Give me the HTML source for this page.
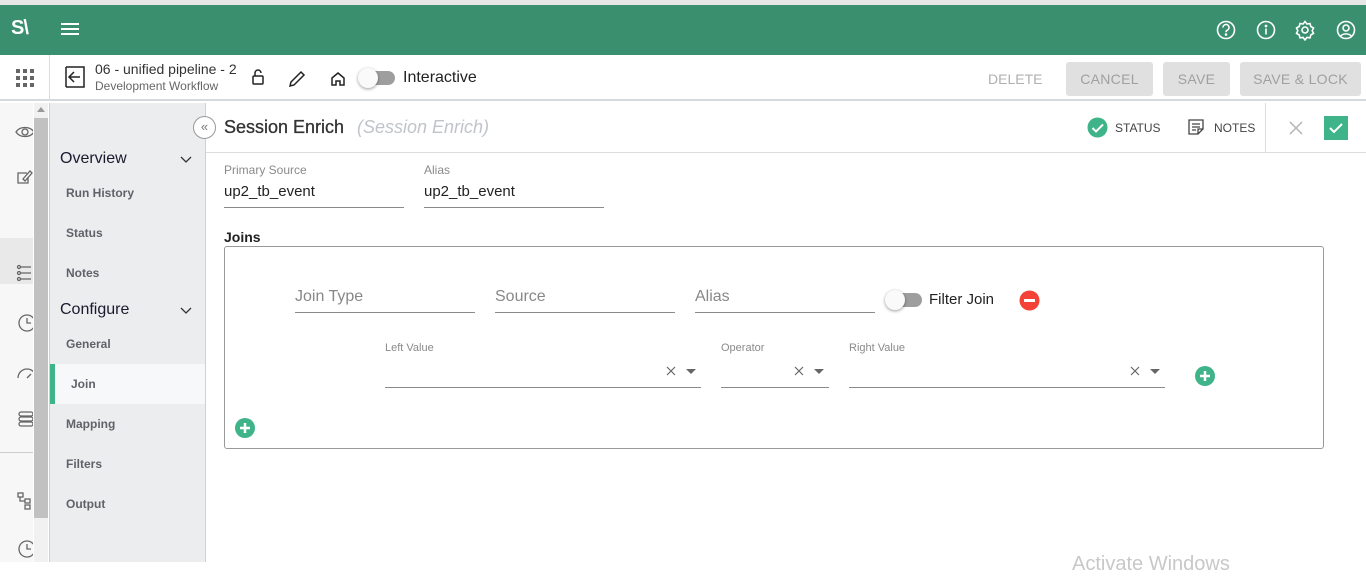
<!DOCTYPE html>
<html><head><meta charset="utf-8"><style>
*{box-sizing:border-box;margin:0;padding:0}
body{width:1366px;height:562px;overflow:hidden;background:#fff;font-family:"Liberation Sans",Arial,sans-serif;position:relative;color:#212121}
.a{position:absolute}
.top{left:0;top:0;width:1366px;height:5px;background:#e6e6e6}
.green{left:0;top:5px;width:1366px;height:50px;background:#3a8f6e}
.tb{left:0;top:55px;width:1366px;height:46px;background:#fff;border-bottom:2px solid #d5d8dc}
.btn{height:34px;top:62px;background:#e0e0e0;border-radius:3px;color:#a0a0a0;font-size:14px;text-align:center;line-height:34px;letter-spacing:.3px}
.rail{left:0;top:103px;width:33px;height:459px;background:#f7f7f7;overflow:hidden}
.sb{left:34px;top:103px;width:14px;height:459px;background:#f1f1f1}
.nav{left:49px;top:103px;width:157px;height:459px;background:#ebedef;border-left:1px solid #d0d0d0;border-right:1px solid #d0d0d0}
.ni{position:absolute;left:16px;font-size:12px;font-weight:bold;color:#5f6368}
.nh{position:absolute;left:10px;font-size:16px;color:#1a1a2e}
.lbl{font-size:12px;color:#8a8a8a}
.val{font-size:15px;color:#222}
.ul{border-bottom:1px solid #8a8a8a}
.ph{font-size:16px;color:#888}
</style></head><body>
<div class="a top"></div>
<div class="a green"></div>
<div class="a" style="left:11px;top:17px;color:#fff;font-weight:bold;font-size:20px;letter-spacing:-1px">S\</div>
<div class="a" style="left:61px;top:23px;width:18px;height:2px;background:#fff;box-shadow:0 5px #fff,0 10px #fff"></div>
<svg class="a" style="left:1215px;top:19px" width="145" height="22" fill="none" stroke="#fff" stroke-width="1.6">
<circle cx="11" cy="11" r="8.5"/><path d="M8 8.5a3 3 0 1 1 4 2.8c-.8.4-1 1-1 2"/><circle cx="11" cy="15.5" r=".5" fill="#fff"/>
<circle cx="51" cy="11" r="8.5"/><circle cx="51" cy="7" r=".6" fill="#fff"/><path d="M51 9.5v6"/>
<circle cx="90" cy="11" r="3"/><path d="M90 2.5l2 2.5 3-.5 .8 3 2.7 1.5-1.3 2.7 1.3 2.7-2.7 1.5-.8 3-3-.5-2 2.5-2-2.5-3 .5-.8-3-2.7-1.5 1.3-2.7-1.3-2.7 2.7-1.5.8-3 3 .5z"/>
<circle cx="131" cy="11" r="8.5"/><circle cx="131" cy="9" r="3"/><path d="M125.5 17.5c2-3.5 9-3.5 11 0"/>
</svg>
<div class="a tb"></div>
<div class="a" style="left:0;top:55px;width:50px;height:46px;border-right:1px solid #ddd"></div>
<svg class="a" style="left:16px;top:69px" width="18" height="18" fill="#666"><rect x="0" y="0" width="4" height="4"/><rect x="7" y="0" width="4" height="4"/><rect x="14" y="0" width="4" height="4"/><rect x="0" y="7" width="4" height="4"/><rect x="7" y="7" width="4" height="4"/><rect x="14" y="7" width="4" height="4"/><rect x="0" y="14" width="4" height="4"/><rect x="7" y="14" width="4" height="4"/><rect x="14" y="14" width="4" height="4"/></svg>
<svg class="a" style="left:64px;top:66px" width="22" height="22" fill="none" stroke="#222" stroke-width="1.5"><path d="M2 1v20M2 1h18v20H2M16 11H6M10 6l-5 5 5 5"/></svg>
<div class="a" style="left:95px;top:61px;font-size:14px;color:#333">06 - unified pipeline - 2</div>
<div class="a" style="left:95px;top:79px;font-size:12px;color:#666">Development Workflow</div>
<svg class="a" style="left:250px;top:68px" width="120" height="20" fill="none" stroke="#222" stroke-width="1.5"><rect x="3" y="8" width="10" height="8" rx="1"/><path d="M5 8V5a3 3 0 0 1 6 0"/><path d="M40 18l1-4 10-10 3 3-10 10z"/><path d="M82 10l6-5 6 5v7h-4v-4h-4v4h-4z"/></svg>
<div class="a" style="left:361px;top:71px;width:34px;height:14px;border-radius:7px;background:#9e9e9e"></div>
<div class="a" style="left:358px;top:68px;width:20px;height:20px;border-radius:50%;background:#fafafa;box-shadow:0 1px 3px rgba(0,0,0,.4)"></div>
<div class="a" style="left:403px;top:69px;font-size:16px;color:#222">Interactive</div>
<div class="a" style="left:988px;top:71px;font-size:14px;color:#b0b0b0">DELETE</div>
<div class="a btn" style="left:1066px;width:87px">CANCEL</div>
<div class="a btn" style="left:1163px;width:67px">SAVE</div>
<div class="a btn" style="left:1240px;width:121px">SAVE &amp; LOCK</div>

<div class="a rail">
<div class="a" style="left:0;top:135px;width:33px;height:46px;background:#e9e9e9"></div>
<div class="a" style="left:0;top:349px;width:33px;height:1px;background:#ccc"></div>
<svg class="a" style="left:15px;top:18px" width="22" height="440" fill="none" stroke="#666" stroke-width="1.3">
<path d="M1 11c4-6 14-6 18 0c-4 6-14 6-18 0z"/><circle cx="10" cy="11" r="3"/>
<path d="M12 52H3v10h10v-6M8 58l7-8 2 2-7 8z"/>
<circle cx="4" cy="146" r="1.5"/><circle cx="4" cy="152" r="1.5"/><circle cx="4" cy="158" r="1.5"/><path d="M6 146h10M6 152h10M6 158h10"/>
<circle cx="12" cy="202" r="8"/><path d="M12 197v5h4"/>
<path d="M3 257a9 9 0 0 1 18 0"/><path d="M12 257l4-4"/>
<rect x="4" y="291" width="14" height="4" rx="2"/><rect x="4" y="296" width="14" height="4" rx="2"/><rect x="4" y="301" width="14" height="4" rx="2"/>
<rect x="3" y="372" width="5" height="4"/><rect x="10" y="378" width="5" height="4"/><rect x="10" y="384" width="5" height="4"/><path d="M5 376v4h5"/>
<circle cx="12" cy="428" r="8"/><path d="M12 423v5h4"/>
</svg>
</div>
<div class="a sb"><div class="a" style="left:0;top:15px;width:14px;height:400px;background:#c1c1c1"></div><div class="a" style="left:3px;top:4px;width:0;height:0;border-left:4px solid transparent;border-right:4px solid transparent;border-bottom:5px solid #999"></div></div>
<div class="a nav">
<div class="nh" style="top:47px">Overview</div>
<svg class="a" style="left:130px;top:53px" width="12" height="8" fill="none" stroke="#333" stroke-width="1.3"><path d="M1 1l5 5 5-5"/></svg>
<div class="ni" style="top:83px">Run History</div>
<div class="ni" style="top:123px">Status</div>
<div class="ni" style="top:163px">Notes</div>
<div class="nh" style="top:198px">Configure</div>
<svg class="a" style="left:130px;top:204px" width="12" height="8" fill="none" stroke="#333" stroke-width="1.3"><path d="M1 1l5 5 5-5"/></svg>
<div class="ni" style="top:234px">General</div>
<div class="a" style="left:0;top:261px;width:155px;height:40px;background:#f7f8fa;border-left:5px solid #3fb488"></div>
<div class="ni" style="top:274px;left:21px">Join</div>
<div class="ni" style="top:314px">Mapping</div>
<div class="ni" style="top:354px">Filters</div>
<div class="ni" style="top:394px">Output</div>
</div>
<div class="a" style="left:193px;top:116px;width:23px;height:23px;border-radius:50%;border:1px solid #999;background:#fff;color:#777;font-size:13px;text-align:center;line-height:20px">&laquo;</div>

<div class="a" style="left:224px;top:117px;font-size:18px;color:#333;-webkit-text-stroke:.3px #333">Session Enrich</div>
<div class="a" style="left:357px;top:117px;font-size:18px;color:#c0c4ca;font-style:italic">(Session Enrich)</div>
<div class="a" style="left:206px;top:152px;width:1160px;height:1px;background:#ddd"></div>
<div class="a" style="left:1265px;top:103px;width:1px;height:49px;background:#ddd"></div>
<svg class="a" style="left:1087px;top:117px" width="21" height="21"><circle cx="10.5" cy="10.5" r="10" fill="#3fb488"/><path d="M5.5 11l3.5 3.5 7-7" stroke="#fff" stroke-width="2" fill="none"/></svg>
<div class="a" style="left:1115px;top:121px;font-size:12px;color:#444">STATUS</div>
<svg class="a" style="left:1188px;top:119px" width="18" height="18" fill="none" stroke="#444" stroke-width="1.3"><path d="M1 1h14v9l-5 5H1z"/><path d="M4 5h8M4 8h8M4 11h4M10 15v-5h5"/></svg>
<div class="a" style="left:1214px;top:121px;font-size:12px;color:#444">NOTES</div>
<svg class="a" style="left:1289px;top:121px" width="14" height="14" stroke="#bbb" stroke-width="1.6"><path d="M1 1l12 12M13 1L1 13"/></svg>
<svg class="a" style="left:1324px;top:116px" width="24" height="24"><rect width="24" height="24" fill="#3fb488"/><path d="M6 12l4 4 8-8" stroke="#fff" stroke-width="2" fill="none"/></svg>

<div class="a lbl" style="left:224px;top:163px">Primary Source</div>
<div class="a val" style="left:224px;top:183px">up2_tb_event</div>
<div class="a ul" style="left:224px;top:207px;width:180px"></div>
<div class="a lbl" style="left:424px;top:163px">Alias</div>
<div class="a val" style="left:424px;top:183px">up2_tb_event</div>
<div class="a ul" style="left:424px;top:207px;width:180px"></div>
<div class="a" style="left:224px;top:229px;font-size:14px;font-weight:bold;color:#222">Joins</div>
<div class="a" style="left:224px;top:246px;width:1100px;height:203px;border:1px solid #999;border-radius:3px"></div>
<div class="a ph" style="left:295px;top:288px">Join Type</div><div class="a ul" style="left:295px;top:312px;width:180px"></div>
<div class="a ph" style="left:495px;top:288px">Source</div><div class="a ul" style="left:495px;top:312px;width:180px"></div>
<div class="a ph" style="left:695px;top:288px">Alias</div><div class="a ul" style="left:695px;top:312px;width:180px"></div>
<div class="a" style="left:888px;top:293px;width:34px;height:14px;border-radius:7px;background:#9e9e9e"></div>
<div class="a" style="left:885px;top:290px;width:20px;height:20px;border-radius:50%;background:#fafafa;box-shadow:0 1px 3px rgba(0,0,0,.4)"></div>
<div class="a" style="left:929px;top:291px;font-size:15px;color:#222">Filter Join</div>
<svg class="a" style="left:1019px;top:290px" width="21" height="21"><circle cx="10.5" cy="10.5" r="10" fill="#f44336"/><rect x="5" y="9" width="11" height="3" fill="#fff"/></svg>
<div class="a lbl" style="left:385px;top:342px;font-size:11px">Left Value</div>
<div class="a ul" style="left:385px;top:387px;width:316px"></div>
<div class="a lbl" style="left:721px;top:342px;font-size:11px">Operator</div>
<div class="a ul" style="left:721px;top:387px;width:108px"></div>
<div class="a lbl" style="left:849px;top:342px;font-size:11px">Right Value</div>
<div class="a ul" style="left:849px;top:387px;width:316px"></div>
<svg class="a" style="left:665px;top:365px" width="510" height="12" stroke="#666" stroke-width="1.2" fill="#666">
<path d="M2 2l8 8M10 2L2 10"/><path d="M21 4h10l-5 5z" stroke="none"/>
<path d="M130 2l8 8M138 2l-8 8"/><path d="M149 4h10l-5 5z" stroke="none"/>
<path d="M466 2l8 8M474 2l-8 8"/><path d="M485 4h10l-5 5z" stroke="none"/>
</svg>
<svg class="a" style="left:1195px;top:366px" width="21" height="21"><circle cx="10" cy="10" r="10" fill="#3fb488"/><path d="M10 5v10M5 10h10" stroke="#fff" stroke-width="2.5"/></svg>
<svg class="a" style="left:235px;top:418px" width="21" height="21"><circle cx="10" cy="10" r="10" fill="#3fb488"/><path d="M10 5v10M5 10h10" stroke="#fff" stroke-width="2.5"/></svg>
<div class="a" style="left:1072px;top:553px;font-size:20px;color:#c8c8c8">Activate Windows</div>
</body></html>
